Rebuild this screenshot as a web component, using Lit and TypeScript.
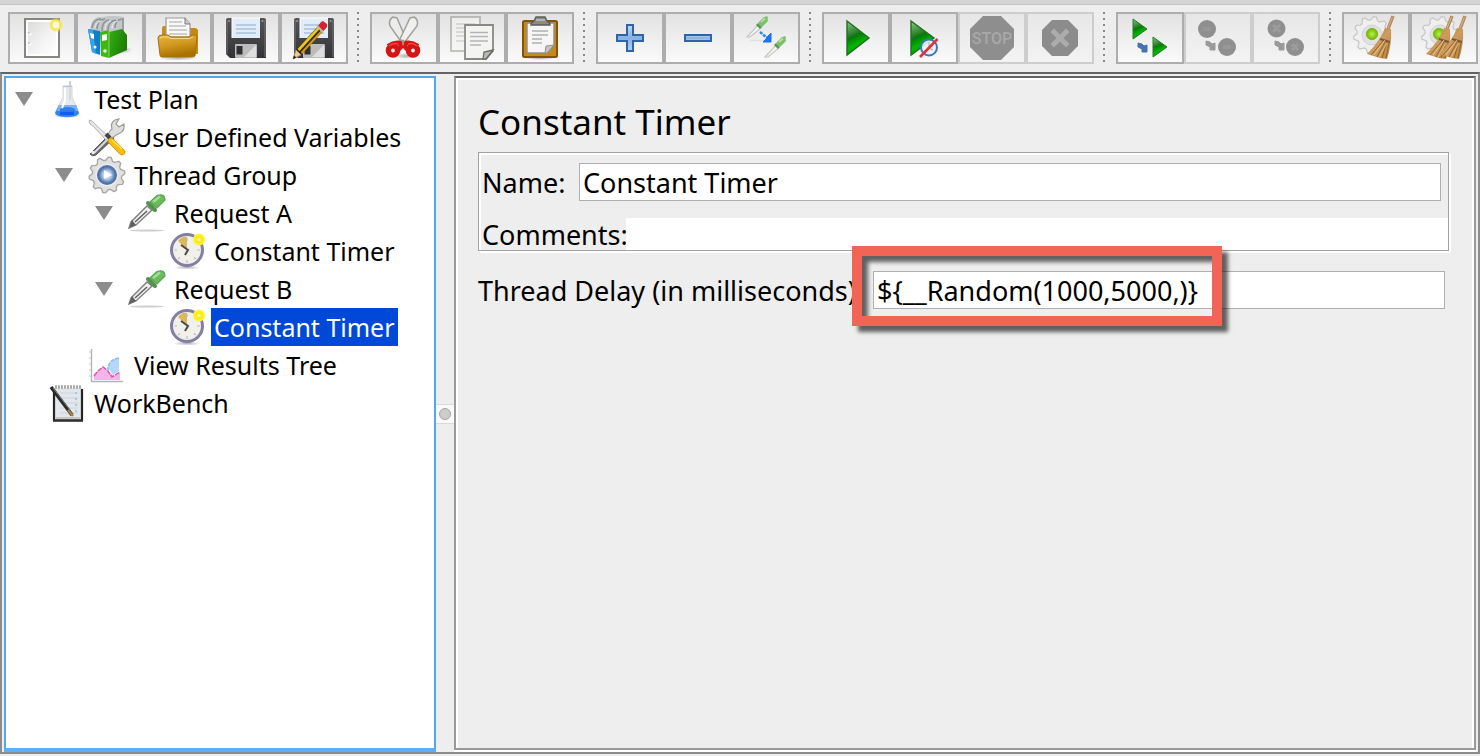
import { LitElement, html, svg, css, nothing } from "lit";
import { customElement, property, state } from "lit/decorators.js";
import { classMap } from "lit/directives/class-map.js";

const defs = svg`<defs>
  <linearGradient id="grn" x1="0" y1="0" x2="0.3" y2="1"><stop offset="0" stop-color="#8fc98a"/><stop offset="0.42" stop-color="#2c7f2c"/><stop offset="0.5" stop-color="#067a06"/><stop offset="0.75" stop-color="#05b405"/><stop offset="1" stop-color="#0a9a0a"/></linearGradient>
  <linearGradient id="gold" x1="0" y1="0" x2="0.3" y2="1"><stop offset="0" stop-color="#e3b44a"/><stop offset="0.5" stop-color="#d29a1e"/><stop offset="1" stop-color="#a87100"/></linearGradient>
  <linearGradient id="paper" x1="0" y1="0" x2="1" y2="1"><stop offset="0" stop-color="#dcdcdc"/><stop offset="0.6" stop-color="#f4f4f4"/><stop offset="1" stop-color="#fff"/></linearGradient>
  <linearGradient id="dark" x1="0" y1="0" x2="0" y2="1"><stop offset="0" stop-color="#555"/><stop offset="1" stop-color="#343236"/></linearGradient>
  <linearGradient id="blu" x1="0" y1="0" x2="0" y2="1"><stop offset="0" stop-color="#c2daf3"/><stop offset="0.5" stop-color="#86b0e0"/><stop offset="1" stop-color="#b5d1f0"/></linearGradient>
  <linearGradient id="green-binder" x1="0" y1="0" x2="1" y2="0.4"><stop offset="0" stop-color="#35b012"/><stop offset="1" stop-color="#1d7d06"/></linearGradient>
  <linearGradient id="straw" x1="0" y1="0" x2="1" y2="1"><stop offset="0" stop-color="#a5753d"/><stop offset="0.5" stop-color="#cf9c5e"/><stop offset="1" stop-color="#b8833f"/></linearGradient>
  <radialGradient id="orb"><stop offset="0" stop-color="#b8f04a"/><stop offset="1" stop-color="#6eb800"/></radialGradient>
  <radialGradient id="lens"><stop offset="0" stop-color="#f2f6fb"/><stop offset="0.45" stop-color="#b4cbe8"/><stop offset="1" stop-color="#2d5795"/></radialGradient>
  <radialGradient id="spark"><stop offset="0" stop-color="#fff"/><stop offset="0.4" stop-color="#fffbc0"/><stop offset="0.6" stop-color="#f7e64a"/><stop offset="1" stop-color="#f7e64a" stop-opacity="0"/></radialGradient>
  <radialGradient id="shade"><stop offset="0" stop-color="#000" stop-opacity="0.3"/><stop offset="1" stop-color="#000" stop-opacity="0"/></radialGradient>
</defs>`;

const floppy = svg`
  <path d="M4 2H40Q42 2 42 4V42H6L2 38V4Q2 2 4 2Z" fill="url(#dark)"/>
  <path d="M3 4V38M41 4V41" stroke="#777" stroke-width="1"/>
  <rect x="8" y="2" width="28" height="20" fill="#e3edf8"/>
  <path d="M8 22V2H36" stroke="#fff" fill="none"/>
  <path d="M12 9H32M12 13H32M12 17H32" stroke="#a9c0da" stroke-width="1.6"/>
  <rect x="11" y="28" width="22" height="14" rx="1" fill="#bcbcbc"/>
  <path d="M20 41L32 29V41Z" fill="#dedede"/>
  <rect x="12.500" y="30" width="6" height="8.500" fill="#303030"/>
  <circle cx="38.500" cy="5" r="1" fill="#999"/><circle cx="5" cy="5" r="1" fill="#999"/>`;

const gearPath = (cx: number, cy: number, r: number, teeth: number) => {
  const pts: string[] = [];
  const n = teeth * 4;
  for (let i = 0; i < n; i++) {
    const a = ((i + 0.5) / n) * Math.PI * 2;
    const rad = i % 4 < 2 ? r * 0.82 : r;
    pts.push(`${(cx + Math.cos(a) * rad).toFixed(1)} ${(cy + Math.sin(a) * rad).toFixed(1)}`);
  }
  return `M${pts.join("L")}Z`;
};

const miniDropper = (x: number, y: number) => svg`<g transform="translate(${x} ${y})">
  <path d="M1 20L12 8L15 11L4 20Z" fill="#f4f4f1" stroke="#c6c6c2" stroke-width="1.200"/>
  <path d="M11 7L15 11" stroke="#5e9656" stroke-width="3"/>
  <path d="M13 6L18 1L21 0V4L16 9Z" fill="#7cc06c" stroke="#7cc06c" stroke-width="1.500" stroke-linejoin="round"/>
  <path d="M15 5L19 1.500" stroke="#b2e29c" stroke-width="1.800"/></g>`;

const broom = (x: number, y: number) => svg`<g transform="translate(${x} ${y})">
  <path d="M26 0L21 13" stroke="#b08a5c" stroke-width="3.400"/>
  <path d="M25.500 1L21 12" stroke="#dcb88a" stroke-width="1"/>
  <path d="M18 12L24 13Q25 28 20 43L13 42L0 38Q13 25 18 12Z" fill="url(#straw)"/>
  <path d="M13 23L23 26" stroke="#7c5a35" stroke-width="2"/>
  <path d="M16 25L4 39M18 26L10 41M20 26L15 42M22 27L19 42" stroke="#8b602d" stroke-width="0.900"/>
  <path d="M18 24L7 39M20 27L12 41" stroke="#e9c389" stroke-width="0.900"/></g>`;

const arrow = (x: number, y: number, color: string) => svg`<path transform="translate(${x} ${y})" d="M0 0L4 1L6 3L9 2V9L4 9L4 6L0 4Z" fill="${color}" stroke="${color}" stroke-linejoin="round"/>`;
const whiteGear = svg`<path d="${gearPath(18, 19, 18.5, 10)}" fill="#efefef" stroke="#c6c6c6" stroke-width="1.200"/><circle cx="18" cy="19" r="10" fill="#e0e0e0" stroke="#d4d4d4"/>`;

const glyphs: Record<string, unknown> = {
  new: svg`<rect x="5" y="3" width="34" height="38" fill="#fff" stroke="#7c7c76" stroke-width="1.800"/><rect x="8" y="6" width="28" height="32" fill="url(#paper)"/>
    <circle cx="10" cy="18" r="1.600" fill="#fff"/><circle cx="10" cy="28" r="1.600" fill="#fff"/><path d="M8 17H10M8 27H10" stroke="#aaa"/>
    <circle cx="36" cy="9" r="7.500" fill="url(#spark)"/><circle cx="36" cy="9" r="4.500" fill="none" stroke="#f5e55c" stroke-width="1.600"/>`,
  templates: svg`<ellipse cx="34" cy="34" rx="10" ry="4" fill="url(#shade)"/>
    <path d="M3 9Q5 0 14 1Q24 -1 36 1V17L14 24L2 15Z" fill="#c3c7ca"/>
    <path d="M4 12Q5 3 13 3M9 13Q9 4 17 3M14 15Q14 5 21 4M20 14Q20 5 28 4M27 12Q27 4 34 3M35 2V16" stroke="#8e9498" stroke-width="1.600" fill="none"/>
    <path d="M7 12Q8 5 14 5M17 14Q17 6 23 5M24 13Q24 6 30 5" stroke="#e4e4e4" stroke-width="1.200" fill="none"/>
    <path d="M0 13L12 15V39L4 36Z" fill="#0f7fca"/><path d="M0 13L5 14L8 38L4 36Z" fill="#35a4e8"/><path d="M2 17L6 18V23L3 22Z" fill="#fff"/><circle cx="7" cy="31" r="1.500" fill="#fff"/>
    <path d="M12 16L21 14V42L13 40Z" fill="#3fb813"/><path d="M21 16L34 13L39 19V34L21 42Z" fill="url(#green-binder)"/>
    <path d="M21 15V42" stroke="#84d860" stroke-width="1"/><path d="M14 19L19 18V24L14 25Z" fill="#fff"/><circle cx="17" cy="35" r="1.800" fill="#e8ffe0"/>`,
  open: svg`<ellipse cx="22" cy="42" rx="20" ry="2.500" fill="url(#shade)"/>
    <path d="M6 12Q6 10 8 10H12V20H40V12L42 14V38H6Z" fill="#c88e12"/><path d="M33 12H39Q42 13 41 18L40 36H32Z" fill="#c48a10"/>
    <path d="M10 2H29L34 8V21H10Z" fill="#f8f8f8" stroke="#9a9a96" stroke-width="1.200"/><path d="M29 2V8H34" fill="#ccc" stroke="#777"/>
    <path d="M13 6H26M13 10H30M13 14H31M13 18H31" stroke="#c0c0c0" stroke-width="1.500"/>
    <path d="M2 22Q2 19 6 19H12L15 21H33Q36 18 40 19L41 20L39 40Q38 41 35 41H6Q4 41 4 39Z" fill="url(#gold)" stroke="#a27008" stroke-width="1"/>
    <path d="M4 22Q5 20.500 12 21L15 22.500H33L37 21" stroke="#f5d98a" stroke-width="1" fill="none"/>`,
  save: floppy,
  saveas: svg`${floppy}<path d="M1 43L4 34L29 7L34 12L9 39Z" fill="#2c2a22"/><path d="M5.500 33L28 8.500L30 10.500L7.500 35Z" fill="#f0c419"/><path d="M10 38L33 13L31.500 11.500L9 36Z" fill="#d49a10"/>
    <path d="M1 43L4 34L9 39Z" fill="#e5cc9c" stroke="#a58a5c"/><path d="M1 43L2 39.500L4.500 41.500Z" fill="#222"/><path d="M26 10L29 6L31 5L35 8V11L31 15Z" fill="#d8232e"/><path d="M25 10L31 16" stroke="#bbb" stroke-width="2"/>`,
  cut: svg`<ellipse cx="24" cy="40" rx="11" ry="3" fill="url(#shade)"/>
    <path d="M11 1Q6 4 8 10L20 27L24 23L15 2Z" fill="#ececea" stroke="#a0a09c" stroke-width="1.500"/>
    <path d="M32 1Q37 4 35 10L22 27L18 23L28 2Z" fill="#f0f0ee" stroke="#a0a09c" stroke-width="1.500"/>
    <circle cx="21" cy="25" r="1.500" fill="#999"/>
    <ellipse cx="11" cy="34.500" rx="4.600" ry="4.600" fill="none" stroke="#d61414" stroke-width="5.400"/><ellipse cx="31" cy="34.500" rx="4.600" ry="4.600" fill="none" stroke="#d61414" stroke-width="5.400"/>
    <path d="M6 30Q12 26 18 27L19 31L15 35M36 30Q30 26 24 27L23 31L27 35" stroke="#d61414" stroke-width="4.400" fill="none" stroke-linejoin="round"/>
    <path d="M7 30Q11 26.500 16 28M26 28Q31 26.500 35 30" stroke="#ef4b42" stroke-width="1.400" fill="none"/>`,
  copy: svg`<g opacity="0.550"><rect x="1" y="1" width="29" height="34" fill="#f7f7f5" stroke="#8f8f8a" stroke-width="1.800"/><path d="M6 8H25M6 12H25M6 16H22M6 20H14M6 25H14" stroke="#bcbcbc" stroke-width="1.600"/></g>
    <path d="M15 9H43V35L36 43H15Z" fill="#f4f4f2" stroke="#8a8a84" stroke-width="1.800"/>
    <path d="M20 16.500H38M20 20.500H38M20 25H38M20 29H31" stroke="#b4b4b4" stroke-width="1.600"/><path d="M43 34L34 36L33 43H36Z" fill="#b8b8b4" stroke="#6e6e68" stroke-width="1.300"/>`,
  paste: svg`<ellipse cx="22" cy="42" rx="16" ry="2" fill="url(#shade)"/><rect x="5" y="5" width="34" height="36" rx="1.500" fill="#c58819" stroke="#835500" stroke-width="2"/>
    <path d="M9 7H36V30L29 37H9Z" fill="#f6f6f6" stroke="#8e8e88" stroke-width="1.400"/><path d="M36 29L28 30L27 37H29Z" fill="#c4c4c0" stroke="#92928c"/>
    <path d="M14 15H30M14 19H30M14 23H24M14 27H24" stroke="#b0b0b0" stroke-width="1.600"/>
    <path d="M13 9Q13 6 16 5L18 1H27L29 5Q32 6 32 9Z" fill="#8b8c87" stroke="#5b5d58" stroke-width="1.400"/><path d="M18 4H27" stroke="#c2c4be" stroke-width="1.500"/>`,
  expand: svg`<path d="M19 9H25V19H35V25H25V35H19V25H9V19H19Z" fill="url(#blu)" stroke="#2f64a8" stroke-width="2"/>`,
  collapse: svg`<rect x="9" y="19" width="26" height="6" fill="url(#blu)" stroke="#2f64a8" stroke-width="2"/>`,
  toggle: svg`<path d="M6 24.500H20" stroke="#e0e0e0" stroke-width="1.500"/>${miniDropper(2, 1)}${miniDropper(20, 21)}
    <path d="M16 16L22 21L24 22" stroke="#2f7ff0" stroke-width="2.400" stroke-dasharray="3 1" fill="none"/><path d="M27 17V26H19L22 23L24 20Z" fill="#1d75ee" stroke="#1d75ee"/>`,
  start: svg`<path d="M13 5L35 22L13 39Z" fill="url(#grn)" stroke="#1d701d" stroke-width="1.400"/>`,
  startnow: svg`<path d="M9 5L32 22L9 39Z" fill="url(#grn)" stroke="#1d701d" stroke-width="1.400"/>
    <circle cx="27" cy="31.500" r="8" fill="#f0f2f5" fill-opacity="0.900" stroke="#3a79bd" stroke-width="2"/><path d="M27 26V32L31 34" stroke="#b5c3d0" stroke-width="1.400" fill="none"/><path d="M18 41L35.500 23" stroke="#e03238" stroke-width="2.600"/>`,
  stop: svg`<path d="M13 0H31L44 13V31L31 44H13L0 31V13Z" fill="#8e8e8e"/>
    <text x="22" y="28" text-anchor="middle" font-family="Roboto, 'Liberation Sans', sans-serif" font-weight="500" font-size="16" fill="#a8a8a8">STOP</text>`,
  shutdown: svg`<path d="M14 4H30L40 14V30L30 40H14L4 30V14Z" fill="#8c8c8c"/><path d="M16 16L28 28M28 16L16 28" stroke="#acacac" stroke-width="5" stroke-linecap="square"/>`,
  rstart: svg`<path d="M5 3L19 13L5 23Z" fill="url(#grn)" stroke="#228022"/><path d="M25 21L39 31L25 41Z" fill="url(#grn)" stroke="#228022"/>${arrow(10, 27, "#4673b4")}`,
  rstop: svg`<circle cx="11" cy="13" r="9" fill="#8f8f8f"/><circle cx="31" cy="31" r="9" fill="#8f8f8f"/><path d="M7 13H15M27 31H35" stroke="#979797" stroke-width="4"/>${arrow(10, 25, "#9a9a9a")}`,
  rshutdown: svg`<circle cx="12.500" cy="12.500" r="9" fill="#8f8f8f"/><circle cx="31" cy="31" r="9" fill="#8f8f8f"/><path d="M9 9L16 16M16 9L9 16M28 28L34 34M34 28L28 34" stroke="#9c9c9c" stroke-width="3"/>${arrow(11, 25, "#9a9a9a")}`,
  clear: svg`${whiteGear}<circle cx="18" cy="18" r="5.600" fill="url(#orb)" stroke="#7fb51c"/>${broom(13, 0)}`,
  clearall: svg`${whiteGear}<circle cx="17" cy="18" r="5.600" fill="url(#orb)" stroke="#7fb51c"/>${broom(4, 0)}${broom(17, 0)}`,

  flask: svg`<ellipse cx="19" cy="35.500" rx="15" ry="2.500" fill="url(#shade)"/><path d="M22 7V1" stroke="#bbb" stroke-width="1.400"/>
    <path d="M15 6H24V17L31 33Q30 37 19 37Q8 37 7 33L15 17Z" fill="#e6e9ec" stroke="#d4d8dc"/><path d="M11 25H28L31 33Q30 37 19 37Q8 37 7 33Z" fill="#2f86f3"/><path d="M11 25H28L30 31H9Z" fill="#7fb2f4"/><ellipse cx="19.500" cy="30" rx="8" ry="3" fill="#2f80ee"/><path d="M12 33.500H26" stroke="#0c5fe6" stroke-width="3.500"/>
    <path d="M17 7V21L14 28" stroke="#fff" stroke-width="2" fill="none"/><path d="M22 8V20" stroke="#cdd3d8" stroke-width="1.500"/><path d="M15 6.500H24" stroke="#b4c8e4" stroke-width="1.500"/>`,
  tools: svg`<path d="M3 35L22 16L26 20L8 37Q4 39 2 36Z" fill="#6c6c6c" stroke="#555" stroke-width="1"/><path d="M6 35L22 19" stroke="#ddd" stroke-width="1.800"/>
    <path d="M20 17Q22 12 24 11Q22 5 27 2L31 1L28 6L31 9L36 6Q37 13 32 15Q28 17 24 20Z" fill="#dededc" stroke="#9c9c98" stroke-width="1.200"/>
    <path d="M1 2L4 3L8 7L21 19L18 22L6 9L2 6Z" fill="#e6e6e6" stroke="#b4b4b4" stroke-width="1"/><path d="M18 16L22 20" stroke="#444" stroke-width="4"/>
    <path d="M23 23L34 34" stroke="#d19a08" stroke-width="6.500" stroke-linecap="round"/><path d="M23 23L34 34" stroke="#f8c00c" stroke-width="4.600" stroke-linecap="round"/><path d="M24 22L34 31" stroke="#ffdf66" stroke-width="1.300"/><circle cx="5" cy="34.500" r="1.700" fill="#eee"/>`,
  gear: svg`<path d="${gearPath(19, 19, 18, 10)}" fill="#e0e0de" stroke="#a8a8a6" stroke-width="1.400" stroke-linejoin="round"/><circle cx="19" cy="19" r="11.500" fill="#ececea"/><circle cx="19" cy="19" r="9.300" fill="url(#lens)" stroke="#5579ad" stroke-width="1.500"/><path d="M16 14L24 19L16 23Z" fill="#fff"/>`,
  dropper: svg`<ellipse cx="19" cy="36.500" rx="17" ry="1" fill="#cecece"/><path d="M1 34L3 28L19 12L24 16L8 31Z" fill="#f0f0ee" stroke="#808080" stroke-width="1.400"/><path d="M1 34L4 26L8 31Z" fill="#606060"/><path d="M7 28L19 17" stroke="#5c5c5c" stroke-width="1.400"/>
    <path d="M20 9L27 16" stroke="#55914e" stroke-width="4" stroke-linecap="round"/><path d="M22 8L29 1.500Q37 -1 37 6L29 14Z" fill="#6cba5f" stroke="#5ca552" stroke-width="1.200"/><path d="M25 8L32 2.500" stroke="#a6dc94" stroke-width="2.400"/>`,
  timer: svg`<ellipse cx="19" cy="35.500" rx="14" ry="2" fill="url(#shade)"/><circle cx="19" cy="18" r="15.500" fill="#f1f0ea" stroke="#827fa2" stroke-width="3"/><path d="M19 18L10 9Q14 4 19 5Z" fill="#dcb958"/>
    <path d="M19 6V9M19 28V31M6.500 18H9M29 18H32M10 27L12 25.500M28 27L26 25.500" stroke="#bbb" stroke-width="1.200"/><path d="M13 13L20 18L17 23" stroke="#4a4a4a" stroke-width="2" fill="none"/>
    <circle cx="31" cy="7.500" r="6" fill="#fff240"/><circle cx="31" cy="7.500" r="3" fill="#fffcd0" stroke="#fbee10" stroke-width="3"/>`,
  chart: svg`<path d="M6 34V30Q10 24 14 22L18 24L22 27L26 30L32 27V34Z" fill="#f6b4ec"/><path d="M6 30L10 25L15 21L19 24L24 31L32 26" stroke="#d8609a" stroke-width="1.600" fill="none" stroke-dasharray="5 1"/>
    <path d="M20 22Q22 13 31 12V25L25 29Z" fill="#b6d6fa"/><path d="M20 25Q19 14 31 12" stroke="#8fbcf0" stroke-width="1.600" fill="none" stroke-dasharray="4 1"/>
    <path d="M3.500 3V35.500H35" stroke="#b4b4b4" stroke-width="1.400" fill="none"/><path d="M1 6H3M1 12H3M1 18H3M1 24H3M1 30H3" stroke="#c4c4c4"/>`,
  bench: svg`<path d="M5 4H34V37H5Z" fill="#e4e7ea"/><path d="M6 6V37M34 5V37" stroke="#242424" stroke-width="2.200"/><path d="M5 36.500H35" stroke="#303030" stroke-width="2.600"/><path d="M7 3H33" stroke="#a8a8a8" stroke-width="3.600" stroke-dasharray="2 1"/>
    <path d="M12 9H30M12 14H30M12 19H30M12 24H30M12 29H30" stroke="#cfdbe8" stroke-width="1.400"/><path d="M28 8V32" stroke="#a4c8ea" stroke-width="2" stroke-dasharray="2 4"/><path d="M8 34H32" stroke="#bbb" stroke-width="1.500"/>
    <path d="M3 3L24 31" stroke="#2a2a2a" stroke-width="3.600"/><path d="M5 4L22 26" stroke="#777" stroke-width="1"/><path d="M20 26L25 32" stroke="#a5813e" stroke-width="2.600"/>`,
};

@customElement("jm-icon")
class JmIcon extends LitElement {
  @property() name = "";
  @property({ type: Number }) size = 44;
  static styles = css`
    :host { display: block; flex: none; line-height: 0; }
    svg { display: block; overflow: visible; }
  `;
  render() {
    return html`<svg width=${this.size} height=${this.size} viewBox="0 0 ${this.size} ${this.size}" aria-hidden="true">${defs}${glyphs[this.name]}</svg>`;
  }
}

type Tool = { icon: string; label: string; off?: boolean };
const groups: Tool[][] = [
  [{ icon: "new", label: "New" }, { icon: "templates", label: "Templates" }, { icon: "open", label: "Open" }, { icon: "save", label: "Save" }, { icon: "saveas", label: "Save As" }],
  [{ icon: "cut", label: "Cut" }, { icon: "copy", label: "Copy" }, { icon: "paste", label: "Paste" }],
  [{ icon: "expand", label: "Expand All" }, { icon: "collapse", label: "Collapse All" }, { icon: "toggle", label: "Toggle" }],
  [{ icon: "start", label: "Start" }, { icon: "startnow", label: "Start no pauses" }, { icon: "stop", label: "Stop", off: true }, { icon: "shutdown", label: "Shutdown", off: true }],
  [{ icon: "rstart", label: "Remote Start All" }, { icon: "rstop", label: "Remote Stop All", off: true }, { icon: "rshutdown", label: "Remote Shutdown All", off: true }],
  [{ icon: "clear", label: "Clear" }, { icon: "clearall", label: "Clear All" }],
];

@customElement("jm-toolbar")
class JmToolbar extends LitElement {
  static styles = css`
    :host { display: block; }
    .bar { display: flex; padding: 8px 0 8px 8px; border-top: 4px solid #d3d3d3; background: #eee; box-shadow: inset 0 1px #c4c4c4; }
    .group { display: flex; flex: none; }
    .sep { flex: none; width: 2px; height: 50px; margin: 0 11px 0 9px; background: repeating-linear-gradient(#8a8a8a 0 2px, transparent 2px 6px); }
    button { box-sizing: border-box; display: grid; place-items: center; width: 68px; height: 52px; margin: 0; padding: 0; border: 2px solid #adadad; border-radius: 0; background: linear-gradient(#e2e2e2, #fafafa); }
    button:disabled { border-color: #cdcdcd; background: linear-gradient(#e7e7e7, #f3f3f3); }
  `;
  render() {
    return html`<div class="bar" role="toolbar" aria-label="Main">
      ${groups.map((g, i) => html`${i ? html`<div class="sep"></div>` : nothing}<div class="group">
        ${g.map((t) => html`<button type="button" aria-label=${t.label} ?disabled=${!!t.off}><jm-icon name=${t.icon}></jm-icon></button>`)}
      </div>`)}
    </div>`;
  }
}

type Node = { id: number; icon: string; label: string; children?: Node[] };
const plan: Node[] = [
  { id: 1, icon: "flask", label: "Test Plan", children: [
    { id: 2, icon: "tools", label: "User Defined Variables" },
    { id: 3, icon: "gear", label: "Thread Group", children: [
      { id: 4, icon: "dropper", label: "Request A", children: [{ id: 5, icon: "timer", label: "Constant Timer" }] },
      { id: 6, icon: "dropper", label: "Request B", children: [{ id: 7, icon: "timer", label: "Constant Timer" }] },
    ] },
    { id: 8, icon: "chart", label: "View Results Tree" },
  ] },
  { id: 9, icon: "bench", label: "WorkBench" },
];

@customElement("jm-tree")
class JmTree extends LitElement {
  @state() private selected = 7;
  @state() private closed = new Set<number>();
  static styles = css`
    :host { display: block; box-sizing: border-box; padding-top: 2px; border: 2px solid #55a5f0; border-bottom: 4px solid #5eaef8; background: #fff; overflow: hidden; }
    ul { margin: 0; padding: 0; list-style: none; }
    ul ul { padding-left: 40px; }
    .row { display: flex; align-items: center; height: 38px; white-space: nowrap; }
    .slot { display: flex; flex: none; width: 42px; padding-left: 9px; box-sizing: border-box; }
    .twist { width: 18px; height: 14px; padding: 0; border: 0; background: #8c8c8c; clip-path: polygon(0 0, 100% 0, 50% 100%); }
    .closed { clip-path: polygon(0 0, 100% 50%, 0 100%); }
    .name { margin-left: 5px; padding: 0 3px; font-size: 25px; line-height: 38px; color: #000; cursor: default; }
    .selected { background: #0049d8; color: #fff; }
  `;
  private toggle(id: number) {
    const next = new Set(this.closed);
    if (!next.delete(id)) next.add(id);
    this.closed = next;
  }
  private branch(nodes: Node[], role: string): unknown {
    return html`<ul role=${role}>${nodes.map((n) => html`<li role="treeitem" aria-selected=${this.selected === n.id ? "true" : "false"}>
      <div class="row">
        <span class="slot">${n.children ? html`<button type="button" class=${classMap({ twist: true, closed: this.closed.has(n.id) })} aria-label="Toggle ${n.label}" @click=${() => this.toggle(n.id)}></button>` : nothing}</span>
        <jm-icon name=${n.icon} .size=${38}></jm-icon>
        <span class=${classMap({ name: true, selected: this.selected === n.id })} @click=${() => (this.selected = n.id)}>${n.label}</span>
      </div>
      ${n.children && !this.closed.has(n.id) ? this.branch(n.children, "group") : nothing}
    </li>`)}</ul>`;
  }
  render() {
    return this.branch(plan, "tree");
  }
}

@customElement("jm-timer-panel")
class JmTimerPanel extends LitElement {
  static styles = css`
    :host { display: block; box-sizing: border-box; padding: 20px 27px 20px 22px; border: 2px solid #999; border-top-color: #636363; background: #eee; box-shadow: inset 2px 2px #fff, inset -2px 0 #fff, 0 2px #fff; font-size: 27px; }
    h1 { margin: 0; padding-bottom: 6px; font-size: 35px; line-height: 48px; font-weight: 400; }
    .box { margin-right: -2px; padding: 10px 0 0 3px; border: 1px solid #a2a2a2; box-shadow: inset 2px 2px #fff, 2px 2px #fff; }
    .line { display: flex; align-items: center; }
    .name-line { padding-right: 7px; margin-bottom: 17px; }
    label { flex: none; padding-top: 2px; line-height: 30px; white-space: nowrap; }
    .name-label { width: 97px; }
    .comments-label { width: 144px; }
    .delay-label { width: 395px; }
    input { flex: 1; min-width: 0; box-sizing: border-box; width: 100%; height: 38px; margin: 0; padding: 0 3px; border: 1px solid #b0b0b0; border-radius: 0; outline: 0; background: #fff; color: #000; font: inherit; }
    .plain { height: 32px; border: 0; }
    .delay { margin: 20px 2px 0 0; }
    .field { position: relative; display: flex; flex: 1; min-width: 0; }
    .mark { position: absolute; box-sizing: border-box; left: -21px; top: -25px; width: 370px; height: 80px; border: 10px solid #f26556; box-shadow: 6px 6px 4px rgba(0, 0, 0, 0.6), inset 6px 6px 4px rgba(0, 0, 0, 0.6); pointer-events: none; }
  `;
  render() {
    return html`<h1>Constant Timer</h1>
      <div class="box">
        <div class="line name-line"><label class="name-label" for="name">Name:</label><input id="name" .value=${"Constant Timer"} /></div>
        <div class="line"><label class="comments-label" for="comments">Comments:</label><input id="comments" class="plain" /></div>
      </div>
      <div class="line delay"><label class="delay-label" for="delay">Thread Delay (in milliseconds):</label>
        <div class="field"><input id="delay" .value=${"${__Random(1000,5000,)}"} /><div class="mark"></div></div></div>`;
  }
}

@customElement("app-root")
class AppRoot extends LitElement {
  static styles = css`
    :host { display: flex; flex-direction: column; height: 100vh; overflow: hidden; background: #eee; color: #000; font-family: "Noto Sans", "Open Sans", sans-serif; }
    main { display: grid; grid-template-columns: 432px 18px 1fr; flex: 1; min-height: 0; box-sizing: border-box; padding: 2px 2px 0; border: 2px solid #8c8c8c; border-top-color: #636363; margin-bottom: 2px; }
    jm-timer-panel { margin-bottom: 2px; }
    .divider { display: flex; align-items: center; }
    .knob { display: grid; place-items: center; box-sizing: border-box; width: 18px; height: 20px; border: 1px solid #dadada; border-width: 1px 0; background: #fafafa; }
    .knob::before { content: ""; width: 10px; height: 10px; border: 1px solid #a4a4a4; border-radius: 50%; background: #cdcdcd; }
  `;
  render() {
    return html`<jm-toolbar></jm-toolbar>
      <main><jm-tree></jm-tree><div class="divider"><div class="knob"></div></div><jm-timer-panel></jm-timer-panel></main>`;
  }
}
